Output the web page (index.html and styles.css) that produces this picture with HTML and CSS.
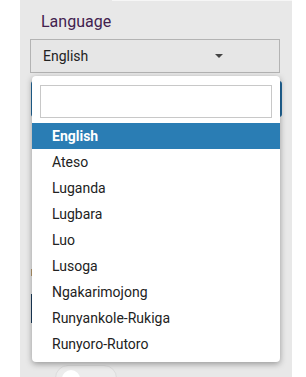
FILE: index.html
```html
<!DOCTYPE html>
<html lang="en">
<head>
  <meta charset="UTF-8">
  <title>Language</title>
  <link rel="stylesheet" href="styles.css">
</head>
<body>

  <div class="panel">
    <div class="tab-edge"></div>
    <label class="label">Language</label>

    <div class="select">
      <span>English</span>
      <span class="caret"></span>
    </div>

    <button class="go-btn">Continue</button>

    <div class="card">
      <div class="card-thumb"></div>
      <div class="card-bar"></div>
    </div>

    <div class="toggle"><span class="knob"></span></div>

    <div class="dropdown">
      <input type="text" class="search">
      <ul class="options">
        <li class="active">English</li>
        <li>Ateso</li>
        <li>Luganda</li>
        <li>Lugbara</li>
        <li>Luo</li>
        <li>Lusoga</li>
        <li>Ngakarimojong</li>
        <li>Runyankole-Rukiga</li>
        <li>Runyoro-Rutoro</li>
      </ul>
    </div>
  </div>

</body>
</html>
```

FILE: styles.css
```css
body {
  margin: 0;
  background: #fff;
  font-family: Roboto, "Liberation Sans", sans-serif;
}

.panel {
  position: relative;
  margin-left: 20px;
  width: 272px;
  height: 377px;
  background: #e8e8e8;
  overflow: hidden;
}

.tab-edge {
  margin-left: 92px;
  height: 1px;
  background: #f6f6f6;
}

.label {
  display: block;
  padding: 11px 0 0 21px;
  height: 27px;
  font-size: 16px;
  color: #42224f;
}

.select {
  margin: 0 12px 0 10px;
  height: 32px;
  border: 1px solid #b3b3b3;
  background: #e6e6e6;
  display: flex;
  align-items: center;
  justify-content: space-between;
  padding: 0 56px 0 12px;
  font-size: 14px;
  color: #222;
}

.caret {
  width: 0;
  height: 0;
  border-left: 4px solid transparent;
  border-right: 4px solid transparent;
  border-top: 4px solid #444;
}

.go-btn {
  display: block;
  margin: 8px 10px 0 11px;
  width: 251px;
  height: 36px;
  border: none;
  border-radius: 3px;
  background: #21679a;
  color: #fff;
}

.card {
  margin: 152px 0 0 11px;
}

.card-thumb {
  width: 6px;
  height: 7px;
  background: #b89a6e;
}

.card-bar {
  margin-top: 18px;
  width: 6px;
  height: 29px;
  background: #1b3c5c;
}

.toggle {
  margin: 42px 0 0 35px;
  width: 60px;
  height: 24px;
  border: 1px solid #dcdcdc;
  border-radius: 13px;
  background: #ececec;
}

.knob {
  display: block;
  margin: 4px 0 0 6px;
  width: 18px;
  height: 18px;
  border-radius: 50%;
  background: #fff;
}

.dropdown {
  position: absolute;
  left: 12px;
  top: 76px;
  width: 248px;
  background: #fff;
  border-radius: 4px;
  box-shadow: 0 2px 6px rgba(0,0,0,0.35);
  padding: 9px 0 5px;
}

.search {
  display: block;
  box-sizing: border-box;
  margin: 0 8px 5px;
  width: 232px;
  height: 33px;
  border: 1px solid #c8c8c8;
  outline: none;
}

.options {
  list-style: none;
  margin: 0;
  padding: 0;
}

.options li {
  height: 26px;
  line-height: 26px;
  padding-left: 20px;
  font-size: 14px;
  color: #222;
}

.options li.active {
  background: #2a7db4;
  color: #fff;
  font-weight: bold;
}
```
